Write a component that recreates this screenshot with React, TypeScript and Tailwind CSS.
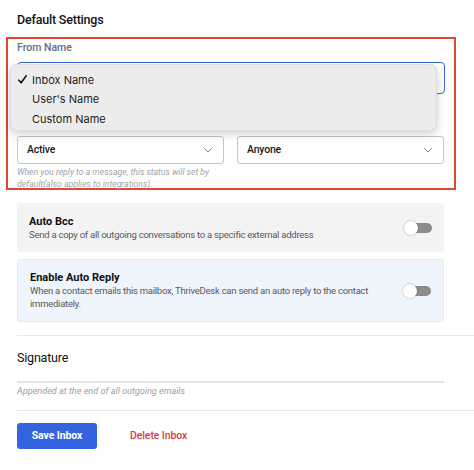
import React from "react";

function Chevron() {
  return (
    <svg width="8" height="5" viewBox="0 0 8 5" fill="none" className="shrink-0">
      <path d="M0.5 0.5L4 4L7.5 0.5" stroke="#8a8a8a" strokeWidth="1" strokeLinecap="round" strokeLinejoin="round" />
    </svg>
  );
}

function Check() {
  return (
    <svg width="9" height="9" viewBox="0 0 9 9" fill="none">
      <path d="M0.8 5.2L3.2 7.8L8.2 0.8" stroke="#1a1a1a" strokeWidth="1.6" strokeLinecap="round" strokeLinejoin="round" />
    </svg>
  );
}

function Toggle() {
  return (
    <div className="relative w-[28px] h-[14px] shrink-0">
      <div className="absolute left-[3px] top-[2px] w-[25px] h-[10px] rounded-full bg-[#8c8c8c]" />
      <div className="absolute left-0 top-0 w-[14px] h-[14px] rounded-full bg-white shadow-[0_0_2px_rgba(0,0,0,0.35)]" />
    </div>
  );
}

function SelectBox({ label }: { label: string }) {
  return (
    <div className="flex-1 h-[28px] border border-[#c4c4c4] rounded-[3px] bg-white flex items-center justify-between pl-[9px] pr-[11px]">
      <span className="text-[10.5px] tracking-[-0.2px] font-medium text-[#1a1a1a]">{label}</span>
      <Chevron />
    </div>
  );
}

export default function App() {
  return (
    <div className="w-[474px] h-[470px] bg-white overflow-hidden font-['Roboto',sans-serif] text-[#1f1f1f]">
      <div className="pl-[17px] pr-[30px] pt-[10px]">
        <h2 className="text-[12.5px] tracking-[-0.2px] leading-[20px] font-medium text-[#111]">Default Settings</h2>
      </div>

      {/* highlighted settings block */}
      <div className="relative ml-[6px] mt-[7px] w-[450px] h-[153px] border-2 border-[#e2462f] pl-[9px] pr-[9px]">
        <div className="pt-[1px] text-[10.5px] leading-[16px] text-[#666d7a] font-medium">From Name</div>
        <div className="mt-[6px] w-[428px] h-[32px] border-[1.5px] border-[#3b68d4] rounded-[4px]" />
        <div className="mt-[42px] w-[427px] flex gap-[13px]">
          <SelectBox label="Active" />
          <SelectBox label="Anyone" />
        </div>
        <p className="mt-[2px] text-[8.7px] leading-[12px] italic text-[#a0a3a8] w-[220px]">
          When you reply to a message, this status will set by default(also applies to integrations).
        </p>

        {/* open menu */}
        <div className="absolute left-[2px] top-[25px] w-[427px] h-[67px] rounded-[7px] bg-[#ececec] border border-[#dcdcdc] shadow-[0_3px_10px_rgba(0,0,0,0.18)] font-['Inter',sans-serif] text-[11px] text-[#1c1c1c] pt-[5px]">
          <div className="flex items-center h-[19.5px]">
            <span className="w-[21px] pl-[7px] flex items-center"><Check /></span>
            <span>Inbox Name</span>
          </div>
          <div className="flex items-center h-[19.5px] pl-[21px]">User's Name</div>
          <div className="flex items-center h-[19.5px] pl-[21px]">Custom Name</div>
        </div>
      </div>

      <div className="pl-[17px] w-[444px] mt-[13px] flex flex-col gap-[7px]">
        <div className="h-[49px] rounded-[3px] bg-[#f3f3f4] flex items-center justify-between pl-[12px] pr-[12px]">
          <div>
            <div className="text-[11px] leading-[14px] font-bold text-[#111]">Auto Bcc</div>
            <div className="text-[9.5px] tracking-[-0.25px] leading-[13px] text-[#585858] mt-[-1px]">
              Send a copy of all outgoing conversations to a specific external address
            </div>
          </div>
          <Toggle />
        </div>
        <div className="h-[63px] rounded-[3px] bg-[#eef5fd] border border-[#e1ebf7] flex items-center justify-between pl-[12px] pr-[12px]">
          <div className="w-[345px]">
            <div className="text-[11px] leading-[14px] font-bold text-[#111]">Enable Auto Reply</div>
            <div className="text-[9.5px] tracking-[-0.25px] leading-[13px] text-[#585858] mt-[-1px]">
              When a contact emails this mailbox, ThriveDesk can send an auto reply to the contact immediately.
            </div>
          </div>
          <Toggle />
        </div>
      </div>

      <div className="ml-[17px] mt-[13px] border-t border-[#e6e7ea]" />

      <div className="pl-[17px] w-[444px]">
        <div className="mt-[12px] text-[12.5px] tracking-[-0.2px] leading-[20px] text-[#111]">Signature</div>
        <div className="mt-[13px] border-b-2 border-[#e3e4e6]" />
        <div className="mt-[1px] text-[9.1px] leading-[14px] italic text-[#9ca0a6]">Appended at the end of all outgoing emails</div>
      </div>

      <div className="ml-[17px] mt-[12px] border-t border-[#e6e7ea]" />

      <div className="pl-[17px] mt-[12px] flex items-center gap-[33px]">
        <button className="w-[80px] h-[26px] rounded-[3px] bg-[#3563df] text-white text-[10.5px] tracking-[-0.1px] font-bold">Save Inbox</button>
        <span className="text-[10.5px] tracking-[-0.1px] font-medium text-[#d93a3f]">Delete Inbox</span>
      </div>
    </div>
  );
}
